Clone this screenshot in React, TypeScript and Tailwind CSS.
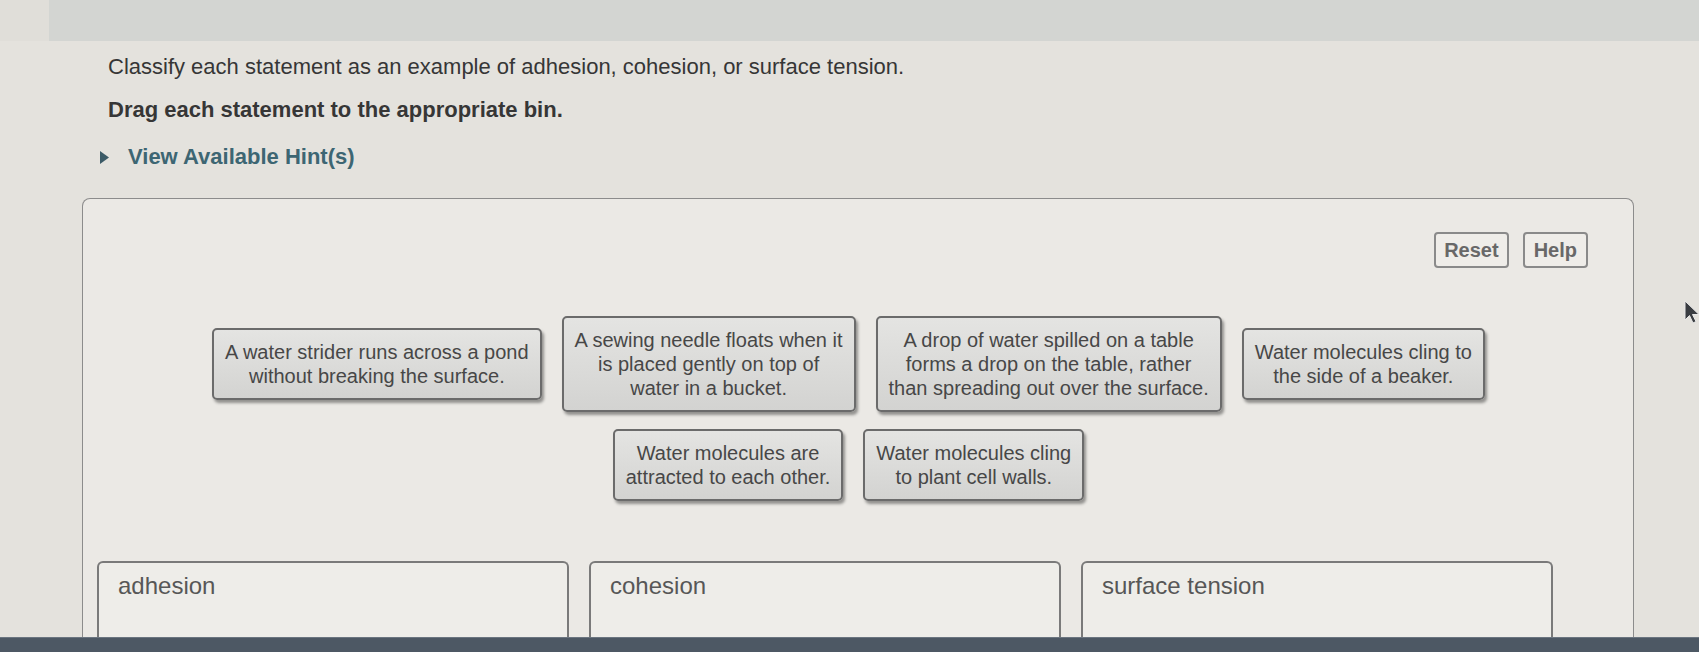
const cards1: string[][] = [
  ['A water strider runs across a pond', 'without breaking the surface.'],
  ['A sewing needle floats when it', 'is placed gently on top of', 'water in a bucket.'],
  ['A drop of water spilled on a table', 'forms a drop on the table, rather', 'than spreading out over the surface.'],
  ['Water molecules cling to', 'the side of a beaker.'],
]

const cards2: string[][] = [
  ['Water molecules are', 'attracted to each other.'],
  ['Water molecules cling', 'to plant cell walls.'],
]

const bins = ['adhesion', 'cohesion', 'surface tension']

function Card({ lines }: { lines: string[] }) {
  return (
    <div className="rounded-[5px] border-2 border-[#6b6b6b] bg-gradient-to-b from-[#e4e4e2] to-[#d3d3d1] px-[11px] py-[10px] text-center text-[20px] leading-[24px] text-[#474747] whitespace-nowrap shadow-[2px_3px_3px_rgba(0,0,0,0.38)]">
      {lines.map((l, i) => (
        <div key={i}>{l}</div>
      ))}
    </div>
  )
}

function Cursor() {
  return (
    <svg className="absolute left-[1684px] top-[300px]" width="18" height="26" viewBox="0 0 18 26">
      <path d="M1 1 L1 20 L5.5 15.5 L9 23 L12 21.5 L8.5 14.5 L15 14.5 Z" fill="#3a3d42" stroke="#e8e8e8" strokeWidth="1" />
    </svg>
  )
}

export default function App() {
  return (
    <div className="relative w-[1699px] h-[652px] overflow-hidden bg-[#e4e2dd] font-['Liberation_Sans',Arial,sans-serif]">
      <div className="flex h-[637px] flex-col overflow-hidden">
        <div className="flex h-[41px] shrink-0">
          <div className="w-[49px] bg-[#e0ded9]" />
          <div className="flex-1 bg-[#d3d5d2]" />
        </div>

        <div className="pl-[108px]">
          <p className="mt-[13px] text-[22px] leading-[26px] text-[#363636]">
            Classify each statement as an example of adhesion, cohesion, or surface tension.
          </p>
          <p className="mt-[17px] text-[22px] font-bold leading-[26px] text-[#363636]">
            Drag each statement to the appropriate bin.
          </p>
          <div className="mt-[21px] flex items-center">
            <svg className="ml-[-8px]" width="9" height="13" viewBox="0 0 9 13">
              <path d="M0 0 L9 6.5 L0 13 Z" fill="#3b5a66" />
            </svg>
            <span className="ml-[19px] text-[22px] font-bold leading-[26px] text-[#3d6673]">View Available Hint(s)</span>
          </div>
        </div>

        <div className="ml-[82px] mt-[28px] w-[1552px] flex-1 rounded-t-lg border-[1.5px] border-b-0 border-[#8c8c8c] bg-[#ebe9e5] pl-[14px] pr-[45px] pt-[33px]">
          <div className="flex justify-end gap-[14px]">
            <button className="h-[36px] rounded-[4px] border-2 border-[#8a8a8a] bg-[#efede9] px-[8px] text-[20px] font-bold text-[#686868]">
              Reset
            </button>
            <button className="h-[36px] rounded-[4px] border-2 border-[#8a8a8a] bg-[#efede9] px-[9px] text-[20px] font-bold text-[#686868]">
              Help
            </button>
          </div>

          <div className="mt-[48px] ml-[12px] flex items-center justify-center gap-[20px]">
            {cards1.map((c, i) => (
              <Card key={i} lines={c} />
            ))}
          </div>
          <div className="mt-[17px] ml-[12px] flex items-center justify-center gap-[20px]">
            {cards2.map((c, i) => (
              <Card key={i} lines={c} />
            ))}
          </div>

          <div className="mt-[60px] flex gap-[20px]">
            {bins.map(b => (
              <div
                key={b}
                className="h-[110px] w-[472px] rounded-t-[6px] border-2 border-b-0 border-[#7a7a7a] bg-[#eeede9] px-[19px] pt-[8px] text-[24px] leading-[30px] text-[#575757]"
              >
                {b}
              </div>
            ))}
          </div>
        </div>
      </div>
      <div className="h-[15px] border-t border-[#6b7580] bg-[#4d5864]" />
      <Cursor />
    </div>
  )
}
